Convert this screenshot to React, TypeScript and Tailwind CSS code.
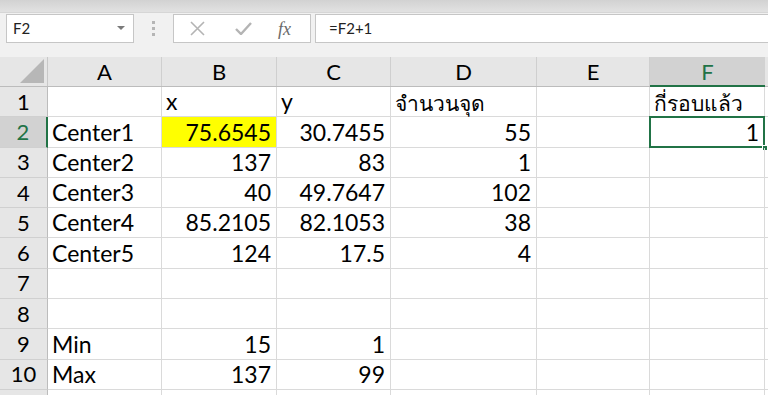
import React from 'react';

type Cell = { v: string; num?: boolean; fill?: boolean; thai?: boolean };

const cols = ['A', 'B', 'C', 'D', 'E', 'F'];
// widths of the column strips, row header first
const widths = ['w-[114px]', 'w-[115px]', 'w-[114px]', 'w-[146px]', 'w-[113px]', 'w-[115px]'];

const n = (v: string): Cell => ({ v, num: true });
const t = (v: string): Cell => ({ v });
const th = (v: string): Cell => ({ v, thai: true });
const e: Cell = { v: '' };

const rows: Cell[][] = [
  [e, t('x'), t('y'), th('จำนวนจุด'), e, th('กี่รอบแล้ว')],
  [t('Center1'), { v: '75.6545', num: true, fill: true }, n('30.7455'), n('55'), e, n('1')],
  [t('Center2'), n('137'), n('83'), n('1'), e, e],
  [t('Center3'), n('40'), n('49.7647'), n('102'), e, e],
  [t('Center4'), n('85.2105'), n('82.1053'), n('38'), e, e],
  [t('Center5'), n('124'), n('17.5'), n('4'), e, e],
  [e, e, e, e, e, e],
  [e, e, e, e, e, e],
  [t('Min'), n('15'), n('1'), e, e, e],
  [t('Max'), n('137'), n('99'), e, e, e],
  [e, e, e, e, e, e],
];

function FormulaBar() {
  return (
    <div className="h-[57px] bg-[#f1f1f1]">
      <div className="h-[13px] bg-gradient-to-b from-[#d2d2d2] to-[#e2e2e2] border-b border-[#d6d6d6]" />
      <div className="flex items-start pt-[1px]">
        <div className="ml-[6px] w-[128px] h-[29px] bg-white border border-[#c6c6c6] flex items-center justify-between pl-[6px] pr-[8px]">
          <span className="text-[15px] text-[#222]">F2</span>
          <svg width="8" height="5" viewBox="0 0 8 5">
            <path d="M0 0 L8 0 L4 4 Z" fill="#7a7a7a" />
          </svg>
        </div>
        <div className="w-[39px] h-[29px] flex flex-col items-center justify-center gap-[3px]">
          <span className="w-[3px] h-[3px] bg-[#b5b5b5]" />
          <span className="w-[3px] h-[3px] bg-[#b5b5b5]" />
          <span className="w-[3px] h-[3px] bg-[#b5b5b5]" />
        </div>
        <div className="w-[138px] h-[29px] bg-white border border-[#c6c6c6] flex items-center">
          <svg className="ml-[16px]" width="15" height="15" viewBox="0 0 15 15">
            <path d="M1 1 L14 14 M14 1 L1 14" stroke="#b4b4b4" strokeWidth="1.6" />
          </svg>
          <svg className="ml-[30px]" width="17" height="13" viewBox="0 0 17 13">
            <path d="M1 7 L6 12 L16 1" stroke="#b4b4b4" strokeWidth="2.4" fill="none" />
          </svg>
          <span className="ml-[26px] text-[18px] italic text-[#6a6a6a] font-['Liberation_Serif',serif] leading-none">
            fx
          </span>
        </div>
        <div className="ml-[4px] flex-1 h-[29px] bg-white border border-r-0 border-[#c6c6c6] flex items-center pl-[13px]">
          <span className="text-[15px] text-[#222]">=F2+1</span>
        </div>
      </div>
    </div>
  );
}

function Header() {
  return (
    <div className="flex h-[30px] bg-[#e6e6e6] border-b border-[#bcbcbc]">
      <div className="w-[48px] shrink-0 border-r border-[#c8c8c8] flex items-end justify-end pr-[3px] pb-[3px]">
        <svg width="24" height="24" viewBox="0 0 24 24">
          <path d="M24 0 L24 24 L0 24 Z" fill="#b7b7b7" />
        </svg>
      </div>
      {cols.map((c, i) =>
        c === 'F' ? (
          <div
            key={c}
            className={`${widths[i]} shrink-0 bg-[#d2d2d2] border-b-2 border-[#217346] -mb-px flex items-center justify-center text-[22px] text-[#217346]`}
          >
            {c}
          </div>
        ) : (
          <div
            key={c}
            className={`${widths[i]} shrink-0 border-r border-[#cfcfcf] flex items-center justify-center text-[22px] text-black`}
          >
            {c}
          </div>
        )
      )}
      <div className="flex-1" />
    </div>
  );
}

export default function App() {
  return (
    <div className="w-[768px] h-[395px] overflow-hidden bg-white font-['Lato','Noto_Sans',sans-serif] text-black">
      <FormulaBar />
      <Header />
      {rows.map((r, ri) => {
        const selected = ri === 1;
        const last = ri === rows.length - 1;
        return (
          <div key={ri} className="flex h-[30.3px]">
            <div
              className={`w-[48px] shrink-0 border-b border-[#d0d0d0] flex items-center justify-center text-[22px] leading-none ${
                selected
                  ? 'bg-[#d2d2d2] text-[#217346] border-r-2 border-r-[#217346]'
                  : 'bg-[#e6e6e6] text-black border-r border-r-[#bcbcbc]'
              }`}
            >
              {last ? '' : ri + 1}
            </div>
            {r.map((c, ci) => {
              const active = selected && ci === 5;
              return (
                <div
                  key={ci}
                  className={`${widths[ci]} shrink-0 relative border-r border-b border-[#dadada] flex items-end pb-[3px] leading-none whitespace-nowrap ${
                    c.thai ? 'text-[21px]' : 'text-[23px]'
                  } ${c.num ? 'justify-end pr-[5px]' : 'justify-start pl-[4px]'} ${c.fill ? 'bg-[#ffff00]' : ''}`}
                >
                  {active && (
                    <>
                      <span className="absolute -left-px -top-px right-[-1px] bottom-[-1px] border-2 border-[#217346]" />
                      <span className="absolute right-[-4px] bottom-[-4px] w-[6px] h-[6px] bg-[#217346] border border-white" />
                    </>
                  )}
                  <span className="relative">{c.v}</span>
                </div>
              );
            })}
            <div className="flex-1 border-b border-[#dadada]" />
          </div>
        );
      })}
    </div>
  );
}
